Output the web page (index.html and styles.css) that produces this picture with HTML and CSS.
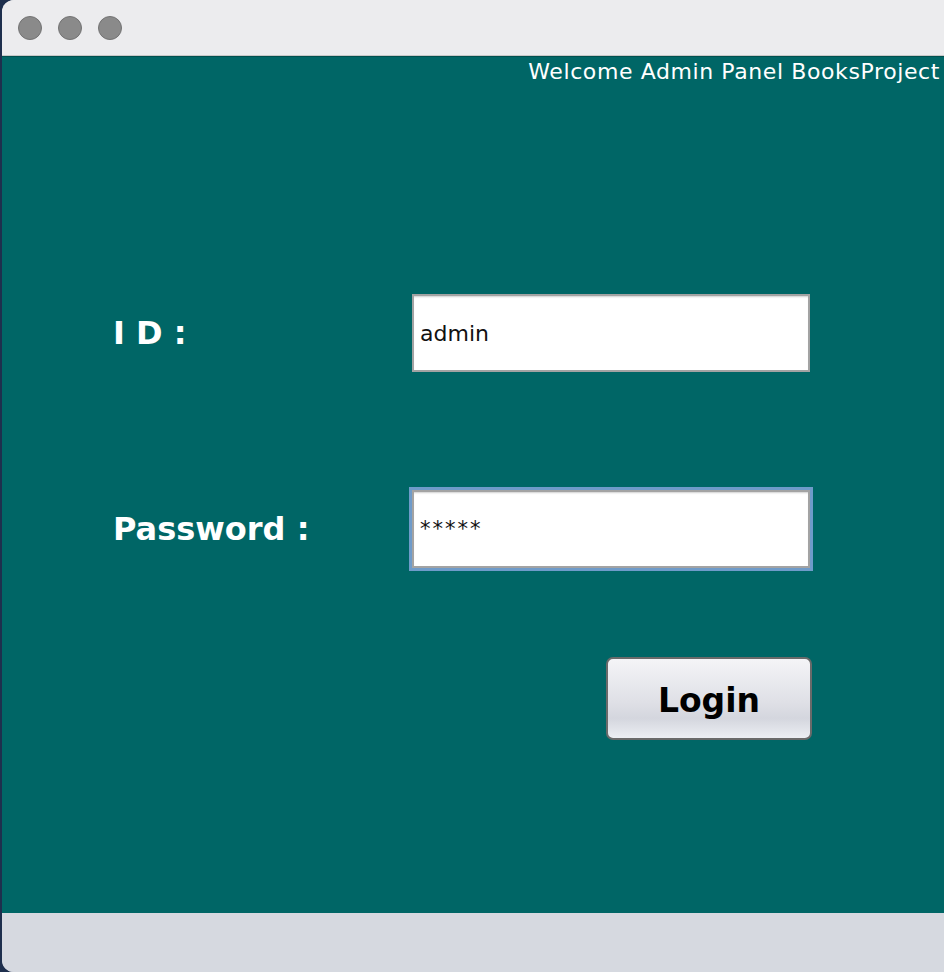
FILE: index.html
```html
<!DOCTYPE html>
<html lang="en">
<head>
  <meta charset="UTF-8" />
  <title>Admin Login | BooksProject</title>
  <link rel="stylesheet" href="styles.css">
</head>
<body>
  <div class="window">
    <div class="titlebar">
      <span class="dot"></span>
      <span class="dot"></span>
      <span class="dot"></span>
    </div>

    <div class="panel">
      <div class="welcome">Welcome Admin Panel BooksProject</div>

      <form class="login-form" onsubmit="return false">
        <label class="label" for="userId">I D :</label>
        <div class="field"><span class="value">admin</span></div>

        <label class="label" for="userPass">Password :</label>
        <div class="field focused"><span class="value stars">*****</span></div>

        <div class="actions">
          <button class="login-btn" type="submit">Login</button>
        </div>
      </form>
    </div>

    <div class="statusbar"></div>
  </div>
</body>
</html>
```

FILE: styles.css
```css
html, body {
  margin: 0;
  height: 100%;
}

body {
  background: #1e2f4d;
  font-family: "DejaVu Sans", sans-serif;
  overflow: hidden;
}

.window {
  margin-left: 2px;
  height: 972px;
  display: flex;
  flex-direction: column;
  border-radius: 12px 0 0 12px;
  overflow: hidden;
  background: #d6d9e0;
}

.titlebar {
  height: 55px;
  background: #ececee;
  border-bottom: 1px solid #c8c8c8;
  display: flex;
  align-items: center;
  gap: 16px;
  padding-left: 16px;
}
.dot {
  width: 22px;
  height: 22px;
  border-radius: 50%;
  background: #8a8a8a;
  border: 1px solid #737373;
}

.panel {
  height: 857px;
  background: #006666;
  border-top: 1px solid #00504f;
  box-sizing: border-box;
}

.welcome {
  text-align: right;
  color: #fff;
  font-size: 22px;
  letter-spacing: 0.6px;
  padding: 2px 4px 0 0;
  line-height: 26px;
}

.login-form {
  display: grid;
  grid-template-columns: 299px 398px;
  grid-auto-rows: 78px;
  row-gap: 118px;
  margin: 209px 0 0 111px;
  align-items: center;
}

.label {
  color: #fff;
  font-weight: bold;
  font-size: 32px;
}

.field {
  height: 78px;
  box-sizing: border-box;
  background: #fff;
  border: 2px solid #a3a3a3;
  box-shadow: inset 0 2px 2px -1px #d0d0d0;
  display: flex;
  align-items: center;
  padding-left: 6px;
}
.field.focused {
  outline: 3px solid #6f9bc9;
}

.value {
  font-size: 22px;
  color: #111;
}
.stars {
  font-size: 21px;
  letter-spacing: 2px;
}

.actions {
  grid-column: 2;
  display: flex;
  justify-content: flex-end;
  margin-top: -29px;
  align-self: start;
}

.login-btn {
  width: 206px;
  height: 83px;
  padding-top: 4px;
  border: 2px solid #6a6a6a;
  border-radius: 7px;
  background: linear-gradient(#f4f4f7, #dfe0e6 55%, #d4d6de 75%, #eceef3);
  font-family: "DejaVu Sans", sans-serif;
  font-size: 33px;
  font-weight: bold;
  color: #000;
  margin-right: -2px;
}

.statusbar {
  flex: 1;
  background: #d6d9e0;
}
```
